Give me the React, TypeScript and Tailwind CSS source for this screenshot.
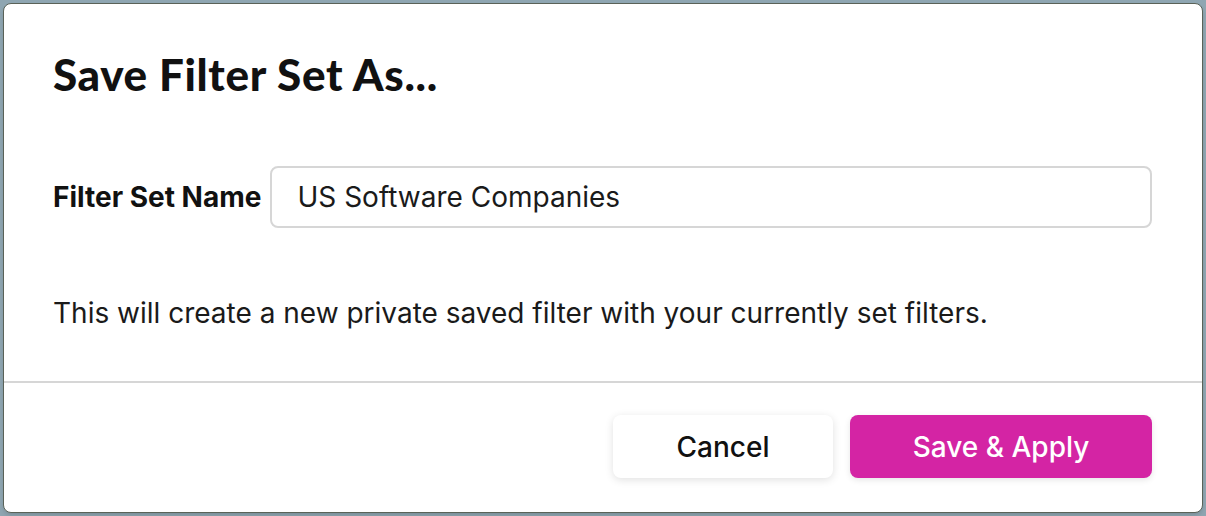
export default function App() {
  return (
    <div className="w-[1206px] h-[516px] bg-[#8fa6b2] p-[3px]" style={{ fontFamily: 'Inter, "Noto Sans", sans-serif' }}>
      <div className="h-full flex flex-col rounded-lg border border-[#5a6258] bg-white shadow-md overflow-hidden">
        {/* Header */}
        <h1
          className="pl-[49px] pt-[46px] text-[44px] leading-[48px] font-black text-[#111111] tracking-[0.65px]"
          style={{ fontFamily: 'Lato, "Noto Sans", sans-serif' }}
        >
          Save Filter Set As...
        </h1>

        {/* Body */}
        <div className="pl-[49px] pr-[50px] pt-[68px] flex flex-col">
          <div className="flex items-center gap-[9px]">
            <label className="text-[28px] font-bold text-[#111111] whitespace-nowrap">Filter Set Name</label>
            <input
              type="text"
              defaultValue="US Software Companies"
              className="flex-1 h-[62px] rounded-lg border-2 border-[#d6d6d6] px-[25px] text-[28px] text-[#1a1a1a] outline-none"
            />
          </div>
          <p className="mt-[67px] text-[28px] leading-[36px] text-[#1a1a1a]">
            This will create a new private saved filter with your currently set filters.
          </p>
        </div>

        <div className="mt-[50px] h-[2px] bg-[#d6d6d6]" />

        {/* Footer */}
        <div className="flex justify-end gap-[17px] pt-[32px] pr-[50px]">
          <button className="w-[220px] h-[63px] rounded-lg bg-white text-[28px] font-medium text-[#111111] shadow-[0_2px_8px_rgba(0,0,0,0.12)]">
            Cancel
          </button>
          <button className="w-[302px] h-[63px] rounded-lg bg-[#d424a4] text-[28px] font-medium text-white shadow-[0_2px_6px_rgba(0,0,0,0.1)]">
            Save &amp; Apply
          </button>
        </div>
      </div>
    </div>
  )
}
